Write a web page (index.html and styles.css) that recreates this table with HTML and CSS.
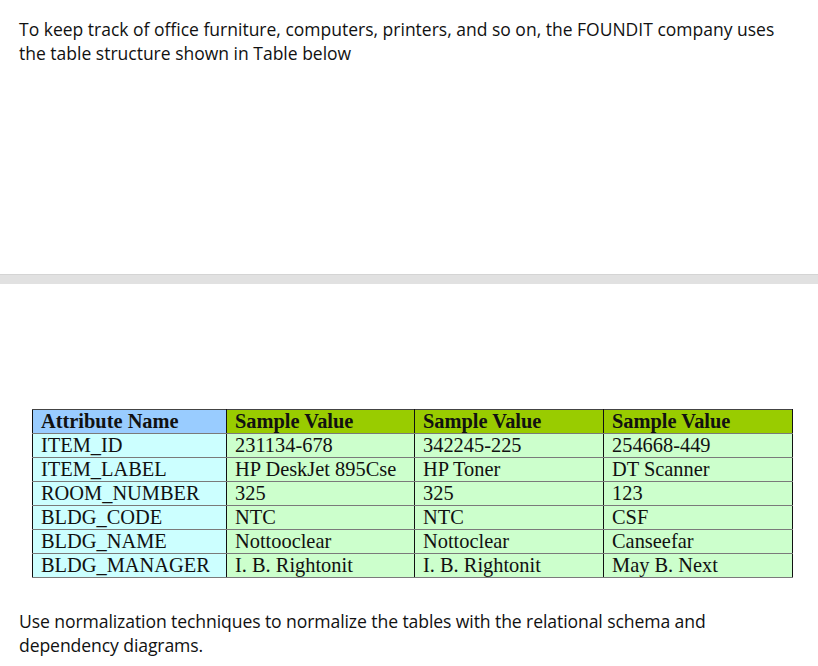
FILE: index.html
```html
<!DOCTYPE html>
<html>
<head>
<meta charset="utf-8">
<link rel="stylesheet" href="styles.css">
</head>
<body>
<div class="page">
  <section class="intro">
    <p class="txt">To keep track of office furniture, computers, printers, and so on, the FOUNDIT company uses the table structure shown in Table below</p>
  </section>
  <div class="divider"></div>
  <section class="tablewrap">
    <table class="data">
      <thead>
        <tr>
          <th class="attr">Attribute Name</th>
          <th>Sample Value</th>
          <th>Sample Value</th>
          <th>Sample Value</th>
        </tr>
      </thead>
      <tbody>
        <tr><td class="attr">ITEM_ID</td><td>231134-678</td><td>342245-225</td><td>254668-449</td></tr>
        <tr><td class="attr">ITEM_LABEL</td><td>HP DeskJet 895Cse</td><td>HP Toner</td><td>DT Scanner</td></tr>
        <tr><td class="attr">ROOM_NUMBER</td><td>325</td><td>325</td><td>123</td></tr>
        <tr><td class="attr">BLDG_CODE</td><td>NTC</td><td>NTC</td><td>CSF</td></tr>
        <tr><td class="attr">BLDG_NAME</td><td>Nottooclear</td><td>Nottoclear</td><td>Canseefar</td></tr>
        <tr><td class="attr">BLDG_MANAGER</td><td>I. B. Rightonit</td><td>I. B. Rightonit</td><td>May B. Next</td></tr>
      </tbody>
    </table>
  </section>
  <section class="outro">
    <p class="txt narrow">Use normalization techniques to normalize the tables with the relational schema and dependency diagrams.</p>
  </section>
</div>
</body>
</html>
```

FILE: styles.css
```css
html, body {
  margin: 0;
  padding: 0;
  background: #fff;
}
.page {
  width: 818px;
  height: 666px;
  overflow: hidden;
}
.txt {
  margin: 0;
  font-family: "Open Sans", "Noto Sans", sans-serif;
  font-size: 17.5px;
  line-height: 24px;
  color: #111;
}
.intro {
  padding: 17px 0 0 19px;
  height: 274px;
  box-sizing: border-box;
}
.intro .txt {
  width: 762px;
}
.divider {
  height: 10px;
  background: #e1e1e1;
  border-top: 1px solid #d4d4d4;
  box-sizing: border-box;
}
.tablewrap {
  padding: 125px 0 0 32px;
  height: 320px;
  box-sizing: border-box;
}
.data {
  border-collapse: collapse;
  font-family: "Liberation Serif", "Times New Roman", serif;
  font-size: 20.4px;
  color: #111;
  table-layout: fixed;
  width: 761px;
}
.data th, .data td {
  height: 24px;
  padding: 0 0 0 8px;
  text-align: left;
  line-height: 23px;
  border-left: 1px solid #111;
  border-right: 1px solid #111;
  border-top: 1px solid #7a7a7a;
  border-bottom: 1px solid #7a7a7a;
  white-space: nowrap;
  box-sizing: border-box;
}
.data th {
  font-weight: bold;
  background: #99cc00;
  border-top: 1px solid #444;
}
.data th.attr {
  background: #99ccff;
  width: 194px;
}
.data td {
  background: #ccffcc;
}
.data td.attr {
  background: #ccffff;
}
.data th:nth-child(2), .data td:nth-child(2) { width: 188px; }
.data th:nth-child(3), .data td:nth-child(3) { width: 189px; }
.outro {
  padding: 5px 0 0 19px;
}
.narrow {
  font-size: 17.6px;
  letter-spacing: -0.1px;
  width: 740px;
}
```
